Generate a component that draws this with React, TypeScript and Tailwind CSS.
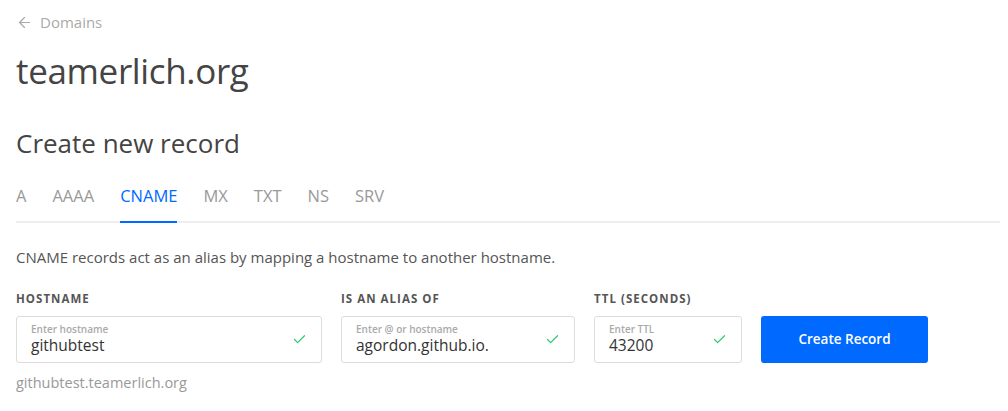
import { Check, ArrowLeft } from "lucide-react";

const tabs = ["A", "AAAA", "CNAME", "MX", "TXT", "NS", "SRV"];

interface FieldProps {
  label: string;
  placeholder: string;
  value: string;
  width: string;
}

function Field({ label, placeholder, value, width }: FieldProps) {
  return (
    <div className={`flex flex-col ${width}`}>
      <label className="text-[11.5px] font-bold tracking-[0.09em] text-[#555] uppercase h-[18px] leading-[18px]">
        {label}
      </label>
      <div className="mt-[8px] h-[47px] border border-[#dcdcdc] rounded-[3px] flex items-center pl-[14px] pr-[14px]">
        <div className="flex-1 flex flex-col">
          <span className="text-[10px] leading-[12px] text-[#aaa] font-semibold">{placeholder}</span>
          <span className="text-[15.5px] leading-[21px] text-[#333]">{value}</span>
        </div>
        <Check className="w-[15px] h-[15px] text-[#2ecc71]" strokeWidth={2} />
      </div>
    </div>
  );
}

export default function App() {
  return (
    <div className="min-h-screen bg-white pl-4 pr-2 font-['Open_Sans',sans-serif]">
      {/* Back link */}
      <a href="#" className="flex items-center gap-[7px] pt-[12px] text-[15px] leading-[20px] text-[#aaa]">
        <ArrowLeft className="w-[17px] h-[17px]" strokeWidth={1.75} />
        Domains
      </a>

      <h1 className="mt-[17px] text-[35px] leading-[44px] text-[#444] tracking-[-0.01em]">teamerlich.org</h1>

      <h2 className="mt-[34px] text-[26px] leading-[32px] text-[#444]">Create new record</h2>

      {/* Tabs */}
      <div className="mt-[25px] flex border-b-2 border-[#eee]">
        {tabs.map((t) => (
          <div
            key={t}
            className={`mr-[26px] pb-[14px] pt-[1px] text-[16.5px] leading-[22px] -mb-[2px] border-b-2 ${
              t === "CNAME" ? "text-[#0069ff] border-[#0069ff]" : "text-[#999] border-transparent"
            }`}
          >
            {t}
          </div>
        ))}
      </div>

      <p className="mt-[23px] text-[15px] leading-[22px] text-[#555]">
        CNAME records act as an alias by mapping a hostname to another hostname.
      </p>

      {/* Form row */}
      <div className="mt-[22px] flex items-end gap-[19px]">
        <Field label="Hostname" placeholder="Enter hostname" value="githubtest" width="w-[306px]" />
        <Field label="Is an alias of" placeholder="Enter @ or hostname" value="agordon.github.io." width="w-[234px]" />
        <Field label="TTL (seconds)" placeholder="Enter TTL" value="43200" width="w-[148px]" />
        <button className="w-[167px] h-[47px] rounded-[3px] bg-[#0069ff] text-white text-[13.5px] font-semibold">
          Create Record
        </button>
      </div>

      <p className="mt-[9px] text-[14.5px] leading-[22px] text-[#999]">githubtest.teamerlich.org</p>
    </div>
  );
}
